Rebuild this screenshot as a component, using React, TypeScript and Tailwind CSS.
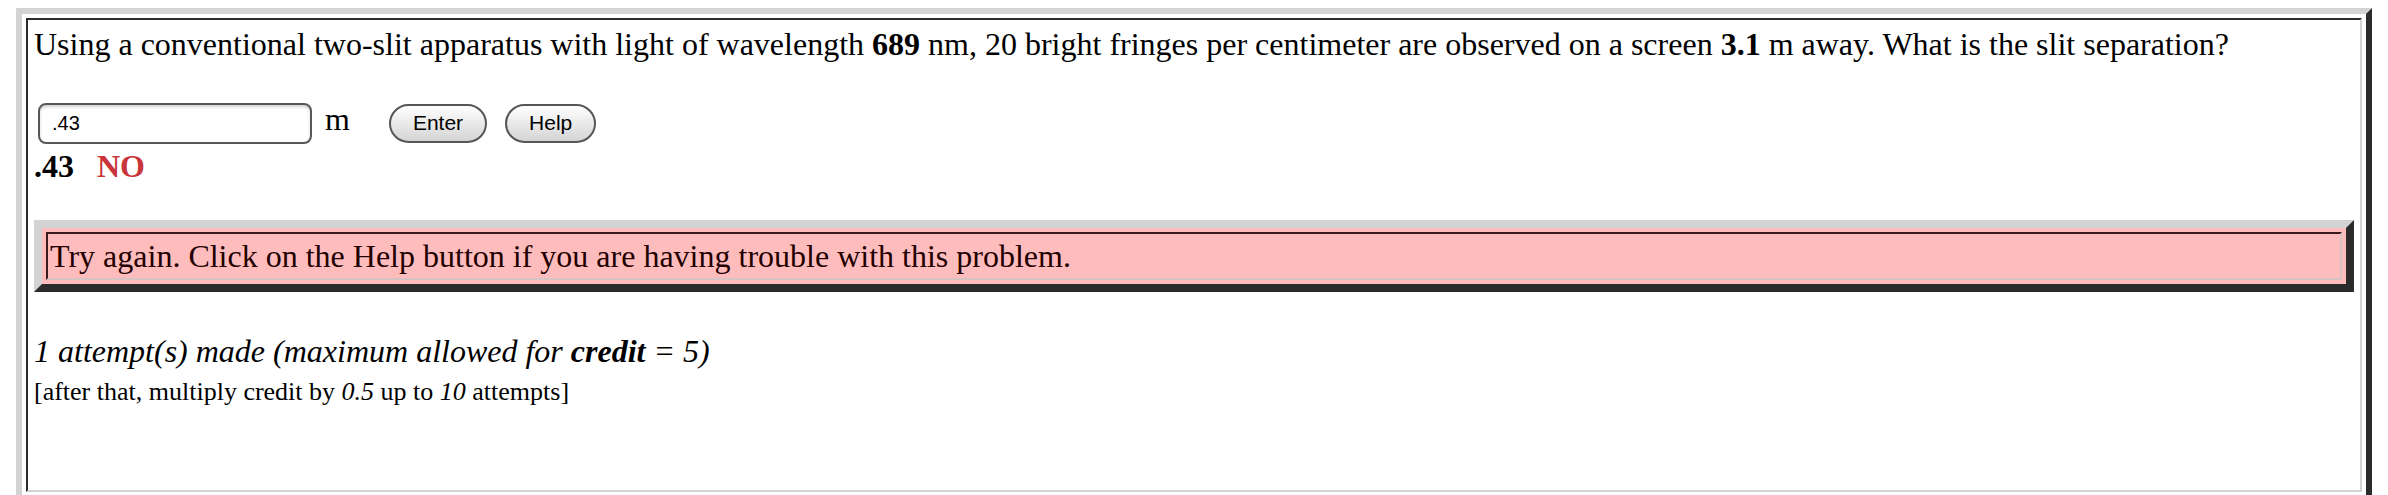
import React from "react";

const serif = { fontFamily: '"Liberation Serif", "Times New Roman", serif' };
const sans = { fontFamily: '"Liberation Sans", Arial, Helvetica, sans-serif' };

function PillButton({ label }: { label: string }) {
  return (
    <button
      type="button"
      className="h-[39px] rounded-full border-2 border-solid border-[#565656] bg-linear-to-b from-[#ffffff] to-[#d4d4d4] px-[22px] text-[21px] leading-[24px] text-black"
      style={sans}
    >
      {label}
    </button>
  );
}

export default function App() {
  return (
    <div className="min-h-[495px] bg-white" style={serif}>
      <div className="mx-[16px] mt-[8px] border-[6px] border-solid border-t-[#d3d3d3] border-l-[#d3d3d3] border-r-[#2b2b2b] border-b-[#2b2b2b] bg-white p-[4px]">
        <div className="h-[474px] border-2 border-solid border-t-[#2b2b2b] border-l-[#2b2b2b] border-r-[#d3d3d3] border-b-[#d3d3d3] bg-white px-[6px] pt-[6px] text-black">
          <p className="text-[32px] leading-[36px]">
            Using a conventional two-slit apparatus with light of wavelength <b>689</b> nm, 20 bright
            fringes per centimeter are observed on a screen <b>3.1</b> m away. What is the slit
            separation?
          </p>

          <div className="mt-[39px] flex items-baseline">
            <input
              readOnly
              value=".43"
              className="ml-[4px] h-[41px] w-[274px] rounded-[8px] border-2 border-solid border-[#585858] bg-white px-[12px] text-[20px] text-black shadow-[inset_0_2px_3px_rgba(0,0,0,0.18)] outline-none"
              style={sans}
            />
            <span className="ml-[13px] text-[32px] leading-[36px]">m</span>
            <span className="ml-[39px] flex items-baseline gap-[18px]">
              <PillButton label="Enter" />
              <PillButton label="Help" />
            </span>
          </div>

          <div className="mt-[4px] text-[32px] leading-[36px] font-bold">
            <span>.43</span>
            <span className="ml-[23px] text-[#c9353a]">NO</span>
          </div>

          <div className="mt-[36px] border-[8px] border-solid border-t-[#d3d3d3] border-l-[#d3d3d3] border-r-[#2b2b2b] border-b-[#2b2b2b] bg-[#ffbcbc] p-[4px]">
            <div className="h-[48px] border-2 border-solid border-t-[#3a1a1a] border-l-[#3a1a1a] border-r-[#d6c4c4] border-b-[#d6c4c4] pl-[2px] text-[32px] leading-[44px] text-[#220000]">
              Try again. Click on the Help button if you are having trouble with this problem.
            </div>
          </div>

          <p className="mt-[41px] text-[32px] leading-[36px] italic">
            1 attempt(s) made (maximum allowed for <b>credit</b> = 5)
          </p>
          <p className="mt-[8px] text-[26px] leading-[30px]">
            [after that, multiply credit by <i>0.5</i> up to <i>10</i> attempts]
          </p>
        </div>
      </div>
    </div>
  );
}
